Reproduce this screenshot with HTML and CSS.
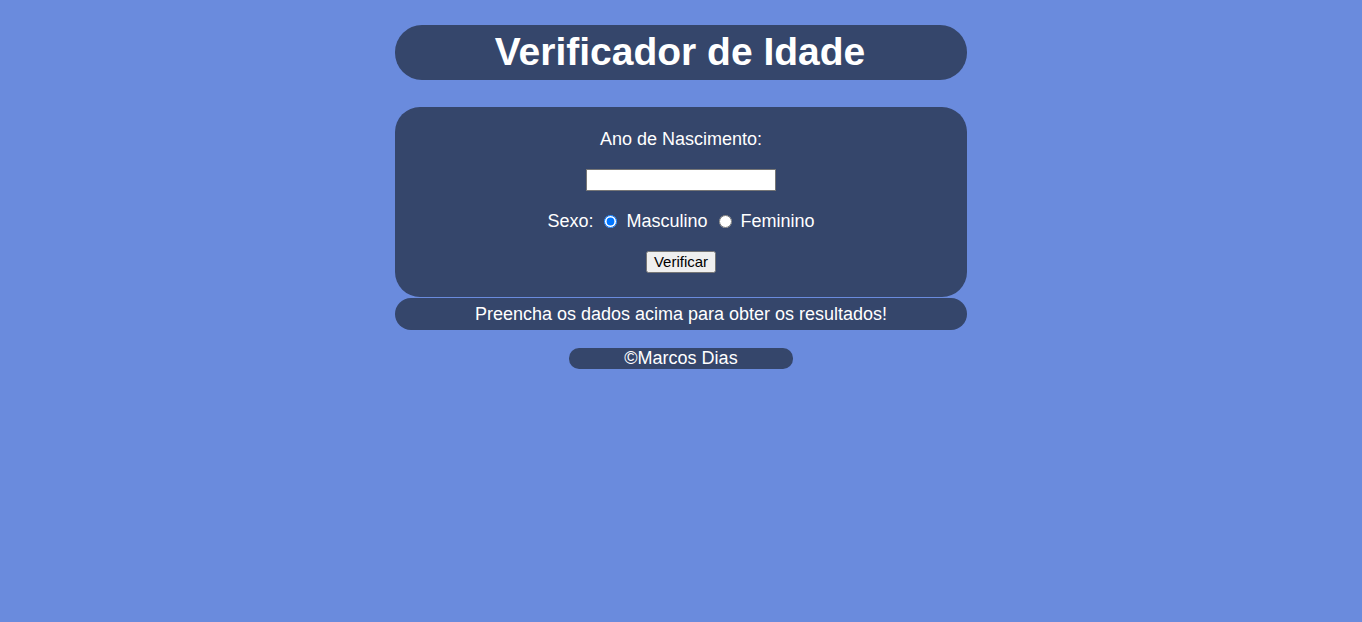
FILE: index.html
```html
<!DOCTYPE html>
<html lang="pt-BR">
<head>
<meta charset="utf-8">
<title>Verificador de Idade</title>
<link rel="stylesheet" href="styles.css">
</head>
<body>
<header class="title-box">
  <h1 class="title">Verificador de Idade</h1>
</header>
<section class="form-box">
  <div class="row">Ano de Nascimento:</div>
  <div class="row row-input"><input type="number" class="year" id="txtano"></div>
  <div class="row row-sexo">Sexo: <input type="radio" name="sexo" id="mas" checked class="radio"> <label for="mas">Masculino</label> <input type="radio" name="sexo" id="fem" class="radio"> <label for="fem">Feminino</label></div>
  <div class="row row-btn"><button class="btn" type="button">Verificar</button></div>
</section>
<div class="result-box">Preencha os dados acima para obter os resultados!</div>
<footer class="footer">©Marcos Dias</footer>
</body>
</html>
```

FILE: styles.css
```css
html, body {
  margin: 0;
  padding: 0;
}
body {
  background: rgb(106, 139, 221);
  font-family: "Liberation Sans", Arial, sans-serif;
  font-size: 18px;
  color: #fff;
  display: flex;
  flex-direction: column;
  align-items: center;
  padding-top: 25px;
}
.title-box {
  width: 572px;
  height: 55px;
  background: rgb(53, 70, 107);
  border-radius: 27px;
  display: flex;
  align-items: center;
  justify-content: center;
}
.title {
  margin: 0;
  font-size: 39px;
  font-weight: bold;
  line-height: 1;
  position: relative;
  top: -1px;
  left: -1px;
}
.form-box {
  box-sizing: border-box;
  width: 572px;
  margin-top: 27px;
  background: rgb(53, 70, 107);
  border-radius: 25px;
  padding: 22px 0 24px;
  display: flex;
  flex-direction: column;
  align-items: center;
}
.row {
  line-height: 21px;
  height: 21px;
  text-align: center;
}
.row-input {
  height: 22px;
  margin-top: 19px;
}
.row-sexo {
  margin-top: 20px;
}
.row-btn {
  height: 22px;
  margin-top: 19px;
}
.year {
  box-sizing: border-box;
  width: 190px;
  height: 22px;
  border: 1px solid #767676;
  padding: 1px 2px;
  margin: 0;
  background: #fff;
  font-size: 13.33px;
  vertical-align: top;
  -moz-appearance: textfield;
}
.year::-webkit-inner-spin-button,
.year::-webkit-outer-spin-button {
  -webkit-appearance: none;
  margin: 0;
}
.radio {
  width: 13px;
  height: 13px;
  margin: 0 4px 0 6px;
  vertical-align: -1px;
}
.btn {
  box-sizing: border-box;
  height: 22px;
  font-family: "Liberation Sans", Arial, sans-serif;
  font-size: 15px;
  line-height: 16px;
  padding: 1px 6px;
  margin: 0;
  vertical-align: top;
  color: #000;
}
.result-box {
  width: 572px;
  height: 32px;
  margin-top: 1px;
  background: rgb(53, 70, 107);
  border-radius: 16px;
  display: flex;
  align-items: center;
  justify-content: center;
}
.footer {
  width: 224px;
  height: 21px;
  margin-top: 18px;
  background: rgb(53, 70, 107);
  border-radius: 10px;
  display: flex;
  align-items: center;
  justify-content: center;
  line-height: 21px;
}
```
